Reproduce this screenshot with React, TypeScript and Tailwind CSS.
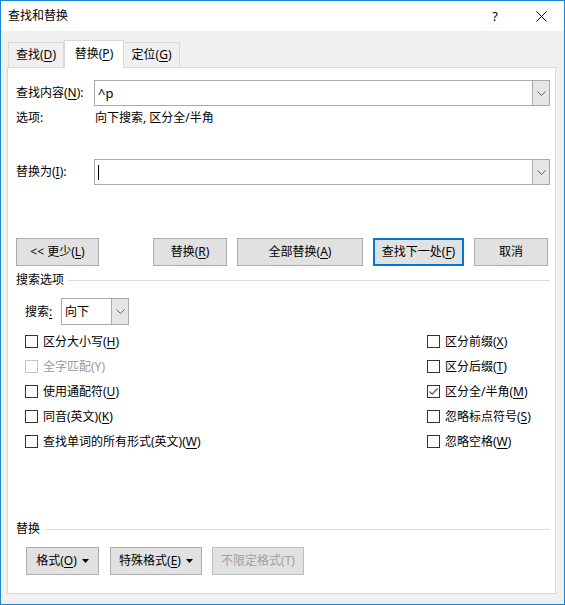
import React from "react";

const font = "font-['Noto_Sans','Noto_Sans_CJK_SC',sans-serif]";

// Accelerator key letter, underlined like the Win32 dialogs
function K({ c }: { c: string }) {
  return <span className="underline underline-offset-[2px]">{c}</span>;
}

function Chevron() {
  return (
    <svg width="9" height="5" viewBox="0 0 9 5" className="block">
      <path d="M0.5 0.5 L4.5 4.5 L8.5 0.5" fill="none" stroke="#606060" strokeWidth="1" />
    </svg>
  );
}

function Caret() {
  return (
    <svg width="7" height="4" viewBox="0 0 7 4" className="block">
      <path d="M0 0 H7 L3.5 4 Z" fill="#000" />
    </svg>
  );
}

function Combo({ children }: { children?: React.ReactNode }) {
  return (
    <div className="flex-1 h-[26px] flex border border-[#a9a9a9] bg-white">
      <div className="flex-1 flex items-center pl-[3px] text-[13px]">{children}</div>
      <div className="w-[17px] flex items-center justify-center bg-[#e6e6e6] border-l border-[#acacac]">
        <Chevron />
      </div>
    </div>
  );
}

function Btn({
  w,
  className = "",
  primary = false,
  disabled = false,
  children,
}: {
  w: string;
  className?: string;
  primary?: boolean;
  disabled?: boolean;
  children: React.ReactNode;
}) {
  return (
    <div
      className={`${w} h-[28px] flex items-center justify-center bg-[#e1e1e1] ${
        primary ? "border-2 border-[#0078d7]" : "border border-[#adadad]"
      } ${disabled ? "text-[#a0a0a0] border-[#bfbfbf]" : "text-black"} ${className}`}
    >
      {children}
    </div>
  );
}

function Check({
  label,
  checked = false,
  disabled = false,
}: {
  label: React.ReactNode;
  checked?: boolean;
  disabled?: boolean;
}) {
  return (
    <div className="h-[25px] flex items-center">
      <div
        className={`w-[13px] h-[13px] border bg-white flex items-center justify-center ${
          disabled ? "border-[#c6c6c6]" : "border-[#333333]"
        }`}
      >
        {checked && (
          <svg width="11" height="11" viewBox="0 0 11 11">
            <path d="M1.5 5.5 L4.2 8.2 L9.5 2.5" fill="none" stroke="#555" strokeWidth="1.2" />
          </svg>
        )}
      </div>
      <span className={`ml-[5px] ${disabled ? "text-[#9a9a9a]" : "text-black"}`}>{label}</span>
    </div>
  );
}

function GroupHead({ title, gap }: { title: string; gap: string }) {
  return (
    <div className="h-[14px] flex items-center">
      <span>{title}</span>
      <div className={`flex-1 h-px bg-[#dcdcdc] ${gap}`} />
    </div>
  );
}

export default function App() {
  return (
    <div
      className={`${font} text-[12px] leading-none w-[565px] h-[605px] border border-[#1883d7] bg-[#f0f0f0] flex flex-col`}
    >
      {/* title bar */}
      <div className="h-[30px] bg-white flex items-center shrink-0">
        <span className="ml-[7px] text-[12px]">查找和替换</span>
        <div className="ml-auto w-[46px] h-full flex items-center justify-center text-[13px]">?</div>
        <div className="w-[46px] h-full flex items-center justify-center">
          <svg width="11" height="11" viewBox="0 0 11 11">
            <path d="M0.5 0.5 L10.5 10.5 M10.5 0.5 L0.5 10.5" stroke="#000" strokeWidth="1" />
          </svg>
        </div>
      </div>

      <div className="flex-1 flex flex-col pl-[6px] pr-[8px] pb-[10px]">
        {/* tabs */}
        <div className="mt-[9px] h-[28px] -mb-px flex items-end pl-[1px] relative z-10">
          <div className="w-[56px] h-[25px] mb-px border border-b-0 border-[#d9d9d9] flex items-center justify-center">
            查找(<K c="D" />)
          </div>
          <div className="w-[60px] h-[28px] bg-white border border-b-0 border-[#d9d9d9] flex items-center justify-center pb-[2px]">
            替换(<K c="P" />)
          </div>
          <div className="w-[56px] h-[25px] mb-px border border-b-0 border-l-0 border-[#d9d9d9] flex items-center justify-center">
            定位(<K c="G" />)
          </div>
        </div>

        {/* panel */}
        <div className="flex-1 bg-white border border-[#d9d9d9] pl-[8px] pr-[5px] pt-[12px] flex flex-col">
          <div className="flex items-center">
            <span className="w-[78px]">
              查找内容(<K c="N" />):
            </span>
            <Combo>^p</Combo>
          </div>
          <div className="mt-[4px] h-[16px] flex items-center">
            <span className="w-[79px]">选项:</span>
            <span>向下搜索, 区分全/半角</span>
          </div>
          <div className="mt-[33px] flex items-center">
            <span className="w-[78px]">
              替换为(<K c="I" />):
            </span>
            <Combo>
              <div className="w-px h-[15px] bg-black" />
            </Combo>
          </div>

          <div className="mt-[53px] flex">
            <Btn w="w-[83px]">
              &lt;&lt; 更少(<K c="L" />)
            </Btn>
            <Btn w="w-[74px]" className="ml-[54px]">
              替换(<K c="R" />)
            </Btn>
            <Btn w="w-[126px]" className="ml-[10px]">
              全部替换(<K c="A" />)
            </Btn>
            <Btn w="w-[91px]" className="ml-[10px]" primary>
              查找下一处(<K c="F" />)
            </Btn>
            <Btn w="w-[74px]" className="ml-[10px]">
              取消
            </Btn>
          </div>

          <div className="mt-[7px]">
            <GroupHead title="搜索选项" gap="ml-[4px]" />
          </div>

          <div className="mt-[11px] pl-[9px] flex items-center">
            <span className="w-[36px]">
              搜索<K c=":" />
            </span>
            <div className="w-[68px] h-[27px] border border-[#a9a9a9] flex bg-white">
              <div className="flex-1 flex items-center pl-[3px]">向下</div>
              <div className="w-[17px] flex items-center justify-center bg-[#e6e6e6] border-l border-[#acacac]">
                <Chevron />
              </div>
            </div>
          </div>

          <div className="mt-[4px] pl-[9px] grid grid-cols-[402px_1fr]">
            <Check label={<>区分大小写(<K c="H" />)</>} />
            <Check label={<>区分前缀(<K c="X" />)</>} />
            <Check label="全字匹配(Y)" disabled />
            <Check label={<>区分后缀(<K c="T" />)</>} />
            <Check label={<>使用通配符(<K c="U" />)</>} />
            <Check label={<>区分全/半角(<K c="M" />)</>} checked />
            <Check label={<>同音(英文)(<K c="K" />)</>} />
            <Check label={<>忽略标点符号(<K c="S" />)</>} />
            <Check label={<>查找单词的所有形式(英文)(<K c="W" />)</>} />
            <Check label={<>忽略空格(<K c="W" />)</>} />
          </div>

          <div className="mt-[68px]">
            <GroupHead title="替换" gap="ml-[5px]" />
          </div>

          <div className="mt-[11px] pl-[10px] flex">
            <Btn w="w-[73px]">
              <span>
                格式(<K c="O" />)
              </span>
              <span className="ml-[5px]">
                <Caret />
              </span>
            </Btn>
            <Btn w="w-[92px]" className="ml-[11px]">
              <span>
                特殊格式(<K c="E" />)
              </span>
              <span className="ml-[5px]">
                <Caret />
              </span>
            </Btn>
            <Btn w="w-[92px]" className="ml-[10px]" disabled>
              不限定格式(T)
            </Btn>
          </div>
        </div>
      </div>
    </div>
  );
}
